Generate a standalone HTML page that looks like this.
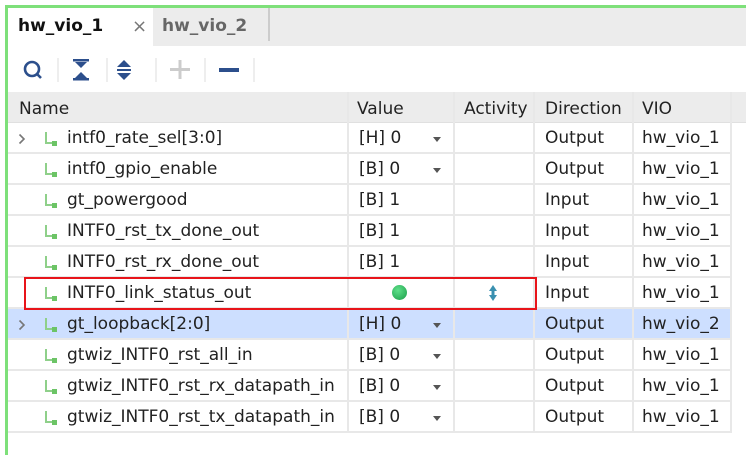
<!DOCTYPE html>
<html><head><style>
*{margin:0;padding:0;box-sizing:border-box}
body{width:746px;height:455px;background:#fff;position:relative;overflow:hidden;font-family:"DejaVu Sans","Liberation Sans",sans-serif;font-size:17px;color:#222}
.a{position:absolute}
.row{position:absolute;left:8px;width:722px;height:31px;border-bottom:2px solid #e8e8e8}
.t{position:absolute;top:5px;white-space:nowrap}
.vl{position:absolute;top:92px;width:2px;height:341px;background:#e8e8e8}
.sig{position:absolute;top:8px;width:14px;height:16px}
.dd{position:absolute;top:14px;left:425px;width:0;height:0;border-left:4px solid transparent;border-right:4px solid transparent;border-top:5px solid #555}
</style></head><body>
<div class="a" style="left:5px;top:5px;width:741px;height:3px;background:#7ee07a"></div>
<div class="a" style="left:5px;top:5px;width:3px;height:450px;background:#7ee07a"></div>
<div class="a" style="left:8px;top:8px;width:738px;height:38px;background:#ececec"></div>
<div class="a" style="left:8px;top:8px;width:145px;height:38px;background:#fff"></div>
<div class="a" style="left:268px;top:8px;width:2px;height:33px;background:#ccc"></div>
<div class="a" style="left:18px;top:16px;font-weight:bold;font-size:17px;color:#111">hw_vio_1</div>
<div class="a" style="left:132px;top:16px;font-size:18px;color:#777">×</div>
<div class="a" style="left:162px;top:16px;font-weight:bold;font-size:17px;color:#666">hw_vio_2</div>
<svg class="a" style="left:20px;top:56px" width="240" height="28">
<circle cx="12" cy="13" r="7" fill="none" stroke="#2c4f8c" stroke-width="2.6"/>
<line x1="17" y1="18" x2="21" y2="22" stroke="#2c4f8c" stroke-width="2.6"/>
<line x1="38" y1="2" x2="38" y2="26" stroke="#ddd"/>
<rect x="53" y="3" width="16" height="2.5" fill="#2c4f8c"/><polygon points="55,6 67,6 61,12" fill="#2c4f8c"/>
<polygon points="55,22 67,22 61,16" fill="#2c4f8c"/><rect x="53" y="22" width="16" height="2.5" fill="#2c4f8c"/>
<line x1="87" y1="2" x2="87" y2="26" stroke="#ddd"/>
<polygon points="104,4 111,11 97,11" fill="#2c4f8c"/><rect x="97" y="13" width="14" height="2" fill="#2c4f8c"/><polygon points="104,24 111,17 97,17" fill="#2c4f8c"/>
<line x1="136" y1="2" x2="136" y2="26" stroke="#ddd"/>
<rect x="150" y="12" width="20" height="3" fill="#ccc"/><rect x="158.5" y="4" width="3" height="19" fill="#ccc"/>
<line x1="185" y1="2" x2="185" y2="26" stroke="#ddd"/>
<rect x="199" y="12" width="20" height="4" fill="#2c4f8c"/>
<line x1="234" y1="2" x2="234" y2="26" stroke="#ddd"/>
</svg>
<div class="a" style="left:8px;top:92px;width:738px;height:31px;background:#ececec;border-bottom:1px solid #e0e0e0"></div>
<div class="a" style="left:19px;top:99px">Name</div>
<div class="a" style="left:357px;top:99px">Value</div>
<div class="a" style="left:464px;top:99px">Activity</div>
<div class="a" style="left:545px;top:99px">Direction</div>
<div class="a" style="left:642px;top:99px">VIO</div>
<div class="row" style="top:309px;background:#cddfff"></div>
<div class="a" style="left:348px;top:309px;width:106px;height:31px;border:1px solid #6aa0d8;background:#cddfff"></div>
<div id="rows"></div>
<script>
var d=[["intf0_rate_sel[3:0]","[H] 0",1,"Output","hw_vio_1",1],
["intf0_gpio_enable","[B] 0",1,"Output","hw_vio_1",0],
["gt_powergood","[B] 1",0,"Input","hw_vio_1",0],
["INTF0_rst_tx_done_out","[B] 1",0,"Input","hw_vio_1",0],
["INTF0_rst_rx_done_out","[B] 1",0,"Input","hw_vio_1",0],
["INTF0_link_status_out","",0,"Input","hw_vio_1",0],
["gt_loopback[2:0]","[H] 0",1,"Output","hw_vio_2",1],
["gtwiz_INTF0_rst_all_in","[B] 0",1,"Output","hw_vio_1",0],
["gtwiz_INTF0_rst_rx_datapath_in","[B] 0",1,"Output","hw_vio_1",0],
["gtwiz_INTF0_rst_tx_datapath_in","[B] 0",1,"Output","hw_vio_1",0]];
var h="";
d.forEach(function(r,i){var y=123+i*31;
h+='<div class="row" style="top:'+y+'px;background:transparent">';
if(r[5])h+='<svg class="a" style="left:10px;top:10px" width="8" height="12"><path d="M1.5 1.5L6 6L1.5 10.5" fill="none" stroke="#777" stroke-width="1.6"/></svg>';
h+='<svg class="sig" style="left:36px" viewBox="0 0 14 16"><path d="M2 1V12H9" fill="none" stroke="#8fd08a" stroke-width="2"/><rect x="8" y="10" width="5" height="5" fill="#6cc466"/></svg>';
h+='<div class="t" style="left:59px">'+r[0]+'</div>';
h+='<div class="t" style="left:351px">'+r[1]+'</div>';
if(r[2])h+='<div class="dd"></div>';
h+='<div class="t" style="left:537px">'+r[3]+'</div><div class="t" style="left:634px">'+r[4]+'</div></div>';});
document.getElementById("rows").innerHTML=h;
</script>
<div class="vl" style="left:347px"></div><div class="vl" style="left:453px"></div><div class="vl" style="left:533px"></div><div class="vl" style="left:632px"></div><div class="vl" style="left:730px"></div>
<div class="a" style="left:392px;top:285px;width:15px;height:15px;border-radius:50%;background:radial-gradient(circle at 40% 35%,#5fe08a,#1a9c48)"></div>
<svg class="a" style="left:488px;top:285px" width="10" height="16"><polygon points="5,0 9,6 1,6" fill="#3a90b0"/><rect x="3.5" y="5" width="3" height="6" fill="#3a90b0"/><polygon points="5,16 9,10 1,10" fill="#3a90b0"/></svg>
<div class="a" style="left:24px;top:277px;width:513px;height:33px;border:2px solid #e8141a"></div>
</body></html>
